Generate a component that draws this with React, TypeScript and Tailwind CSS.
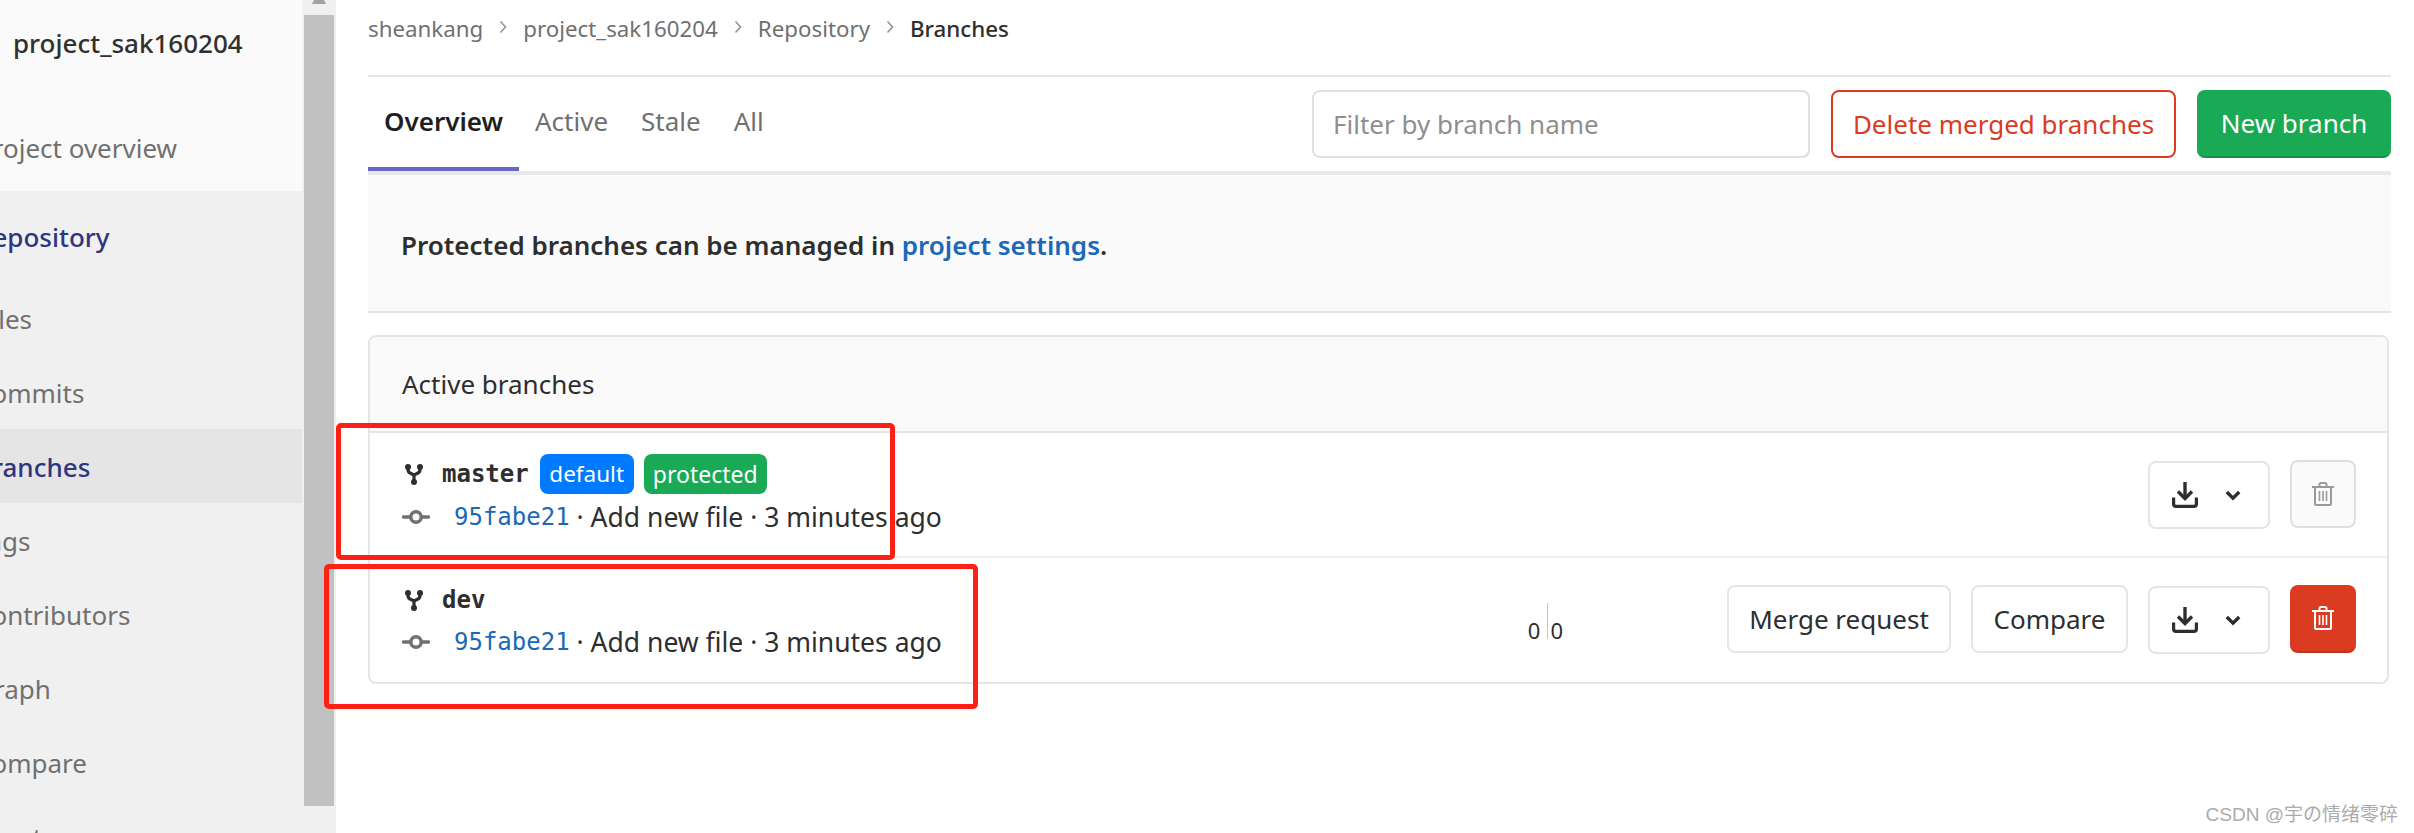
const nav = [
  { label: "Files", indent: "indent-[-22px]" },
  { label: "Commits", indent: "indent-[-25px]" },
  { label: "Branches", indent: "indent-[-25px]" },
  { label: "Tags", indent: "indent-[-25px]" },
  { label: "Contributors", indent: "indent-[-25px]" },
  { label: "Graph", indent: "indent-[-25px]" },
  { label: "Compare", indent: "indent-[-25px]" },
  { label: "Charts", indent: "indent-[-25px]" },
];

function ForkIcon() {
  return (
    <svg width="18" height="21" viewBox="0 0 18 21" fill="none" className="shrink-0">
      <path d="M3 3v2.500q0 3 3 4l3 1.500 3-1.500q3-1 3-4V3M9 10v8" stroke="#2e2e2e" strokeWidth="3.200" />
      <circle cx="3" cy="3" r="3" fill="#2e2e2e" />
      <circle cx="15" cy="3" r="3" fill="#2e2e2e" />
      <circle cx="9" cy="18" r="3" fill="#2e2e2e" />
    </svg>
  );
}

function CommitIcon() {
  return (
    <svg width="28" height="14" viewBox="0 0 28 14" fill="none" className="shrink-0">
      <path d="M1.500 7h7M19.500 7h7" stroke="#707070" strokeWidth="3.400" strokeLinecap="round" />
      <circle cx="14" cy="7" r="5.200" stroke="#707070" strokeWidth="3.400" />
    </svg>
  );
}

function DownloadIcon() {
  return (
    <svg width="26" height="26" viewBox="0 0 26 26" fill="none">
      <path d="M13 0v15" stroke="#2e2e2e" strokeWidth="3.400" />
      <path d="M6 9.500 13 16.500 20 9.500" stroke="#2e2e2e" strokeWidth="3.400" />
      <path d="M1.600 15.500v6.500q0 2.400 2.400 2.400h18q2.400 0 2.400-2.400v-6.500" stroke="#2e2e2e" strokeWidth="3.200" />
    </svg>
  );
}

function Chevron() {
  return (
    <svg width="16" height="11" viewBox="0 0 16 11" fill="none">
      <path d="M1.800 2 8 8.200 14.200 2" stroke="#2e2e2e" strokeWidth="3.400" />
    </svg>
  );
}

function TrashIcon({ color }: { color: string }) {
  return (
    <svg width="22" height="24" viewBox="0 0 22 24" fill="none" stroke={color}>
      <path d="M0 5h22M7.500 5V2.600Q7.500 1 9 1h4q1.500 0 1.500 1.600V5" strokeWidth="2" />
      <path d="M3 5v17q0 1 1 1h14q1 0 1-1V5" strokeWidth="2" />
      <path d="M7.500 9v10M11 9v10M14.500 9v10" strokeWidth="1.600" />
    </svg>
  );
}

function Crumb() {
  return (
    <svg width="8" height="14" viewBox="0 0 8 14" fill="none" className="mb-[4px]">
      <path d="M1.500 1.500 6.500 7l-5 5.500" stroke="#8f8f8f" strokeWidth="1.500" />
    </svg>
  );
}

function DownloadButton() {
  return (
    <div className="flex h-[68px] w-[122px] items-center rounded-lg border-2 border-[#e5e5e5] bg-white pl-[22px]">
      <DownloadIcon />
      <span className="ml-[27px]">
        <Chevron />
      </span>
    </div>
  );
}

function CommitLine() {
  return (
    <div className="flex h-[28px] items-center">
      <CommitIcon />
      <span className="ml-[24px] font-['DejaVu_Sans_Mono',monospace] text-[24px] text-[#1b69b6]">95fabe21</span>
      <span className="ml-[7px] text-[26.500px] text-[#2e2e2e]">· Add new file · 3 minutes ago</span>
    </div>
  );
}

export default function App() {
  return (
    <div className="relative flex h-[833px] w-[2414px] overflow-hidden bg-white font-['Noto_Sans',sans-serif] text-[26px] leading-[28px]">
      {/* Sidebar, cut off on the left by the crop */}
      <aside className="flex w-[336px] shrink-0 bg-[#f0f0f0]">
        <div className="w-[302px] shrink-0">
          <div className="h-[191px] bg-[#fafafa]">
            <div className="flex h-[86px] items-center pl-[13px] text-[26px] font-medium text-[#303030]">
              project_sak160204
            </div>
            <div className="mt-[19px] flex h-[86px] items-center whitespace-nowrap indent-[-23px] text-[#707070]">
              Project overview
            </div>
          </div>
          <div className="flex h-[90px] items-center whitespace-nowrap pt-[2px] indent-[-24px] font-medium text-[#303580]">
            Repository
          </div>
          {nav.map((item) => (
            <div
              key={item.label}
              className={
                item.label === "Branches"
                  ? `flex h-[74px] items-center pt-[2px] ${item.indent} bg-[#e5e5e5] font-medium text-[#303580]`
                  : `flex h-[74px] items-center pt-[2px] ${item.indent} text-[#707070]`
              }
            >
              {item.label}
            </div>
          ))}
        </div>
        {/* Scrollbar */}
        <div className="ml-[2px] flex h-[806px] w-[30px] flex-col">
          <div className="flex h-[15px] justify-center">
            <svg width="16" height="4" viewBox="0 0 16 4">
              <path d="M3 0h10l2 4H1z" fill="#a3a3a3" />
            </svg>
          </div>
          <div className="flex-1 bg-[#c1c1c1]" />
        </div>
      </aside>

      {/* Main */}
      <main className="ml-[32px] flex w-[2023px] flex-col">
        <nav className="flex h-[77px] items-center gap-[16px] border-b-2 border-[#e5e5e5] pb-[17px] text-[22.300px] text-[#707070]">
          <span>sheankang</span>
          <Crumb />
          <span>project_sak160204</span>
          <Crumb />
          <span>Repository</span>
          <Crumb />
          <span className="font-medium text-[#2e2e2e]">Branches</span>
        </nav>

        <div className="flex h-[98px] justify-between border-b-4 border-[#e8e8e8]">
          <div className="flex text-[#707070]">
            <div className="flex w-[151px] items-center justify-center border-b-4 border-[#6666c4] pb-[2px] font-semibold text-[#1f1f1f]">
              Overview
            </div>
            <div className="ml-[16px] flex items-center pb-[6px]">Active</div>
            <div className="ml-[33px] flex items-center pb-[6px]">Stale</div>
            <div className="ml-[33px] flex items-center pb-[6px]">All</div>
          </div>
          <div className="flex gap-[21px] pt-[13px]">
            <input
              readOnly
              placeholder="Filter by branch name"
              className="h-[68px] w-[498px] rounded-lg border-2 border-[#dfdfdf] bg-white px-[19px] placeholder:text-[#8f8f8f]"
            />
            <div className="flex h-[68px] w-[345px] items-center justify-center rounded-lg border-2 border-[#db3b21] bg-white text-[#db3b21]">
              Delete merged branches
            </div>
            <div className="flex h-[68px] w-[194px] items-center justify-center rounded-lg border-b-2 border-[#168f48] bg-[#1aaa55] text-white">
              New branch
            </div>
          </div>
        </div>

        <div className="flex h-[138px] items-center border-b-2 border-[#e5e5e5] bg-[#fafafa] pl-[33px] pt-[4px] font-semibold text-[#2e2e2e]">
          <span>
            Protected branches can be managed in <span className="text-[#1b69b6]">project settings</span>.
          </span>
        </div>

        <section className="mt-[22px] w-[2021px] rounded-lg border-2 border-[#e5e5e5]">
          <div className="flex h-[96px] items-center rounded-t-lg border-b-2 border-[#e5e5e5] bg-[#fafafa] pl-[32px] text-[#2e2e2e]">
            Active branches
          </div>

          <div className="flex h-[125px] justify-between border-b-2 border-[#f0f0f0] pl-[32px] pr-[31px]">
            <div className="pt-[21px]">
              <div className="flex h-[40px] items-center">
                <span className="ml-[3px]"><ForkIcon /></span>
                <span className="ml-[19px] font-['DejaVu_Sans_Mono',monospace] text-[24px] font-bold text-[#2e2e2e]">master</span>
                <span className="ml-[11px] flex h-[40px] w-[94px] items-center justify-center rounded-lg bg-[#007bff] text-[22.500px] text-white">default</span>
                <span className="ml-[10px] flex h-[40px] w-[123px] items-center justify-center rounded-lg bg-[#1aaa55] text-[23px] text-white">protected</span>
              </div>
              <div className="mt-[9px]">
                <CommitLine />
              </div>
            </div>
            <div className="flex gap-[20px] pt-[28px]">
              <DownloadButton />
              <div className="-mt-[1px] flex h-[68px] w-[66px] items-center justify-center rounded-lg border-2 border-[#dfdfdf] bg-[#fafafa]">
                <TrashIcon color="#9a9a9a" />
              </div>
            </div>
          </div>

          <div className="flex h-[124px] justify-between pl-[32px] pr-[31px]">
            <div className="pt-[28px]">
              <div className="flex h-[28px] items-center">
                <span className="ml-[3px]"><ForkIcon /></span>
                <span className="ml-[19px] font-['DejaVu_Sans_Mono',monospace] text-[24px] font-bold text-[#2e2e2e]">dev</span>
              </div>
              <div className="mt-[14px]">
                <CommitLine />
              </div>
            </div>
            <div className="flex pt-[27px]">
              <div className="mr-[164px] mt-[18px] flex h-[36px] items-end text-[22px] leading-[24px] text-[#2e2e2e]">
                <span className="-mb-[3px]">0</span>
                <span className="ml-[7px] mr-[2px] h-[36px] w-px bg-[#c4c4c4]" />
                <span className="-mb-[3px]">0</span>
              </div>
              <div className="flex gap-[20px]">
                <div className="flex h-[68px] w-[224px] items-center justify-center rounded-lg border-2 border-[#e5e5e5] bg-white text-[#2e2e2e]">
                  Merge request
                </div>
                <div className="flex h-[68px] w-[157px] items-center justify-center rounded-lg border-2 border-[#e5e5e5] bg-white text-[#2e2e2e]">
                  Compare
                </div>
                <div className="mt-[1px]">
                  <DownloadButton />
                </div>
                <div className="flex h-[68px] w-[66px] items-center justify-center rounded-lg border-b-2 border-[#c2331c] bg-[#db3b21]">
                  <TrashIcon color="#ffffff" />
                </div>
              </div>
            </div>
          </div>
        </section>
      </main>

      {/* Hand-drawn annotation boxes */}
      <div className="absolute left-[336px] top-[423px] h-[137px] w-[559px] rounded-[5px] border-[5px] border-[#ff2015]" />
      <div className="absolute left-[324px] top-[564px] h-[145px] w-[654px] rounded-[5px] border-[5px] border-[#ff2015]" />

      <div className="absolute right-[16px] top-[804px] font-['Liberation_Sans','Noto_Sans_CJK_SC',sans-serif] text-[19px] leading-[22px] text-[#ababab]">
        CSDN @宇の情绪零碎
      </div>
    </div>
  );
}
